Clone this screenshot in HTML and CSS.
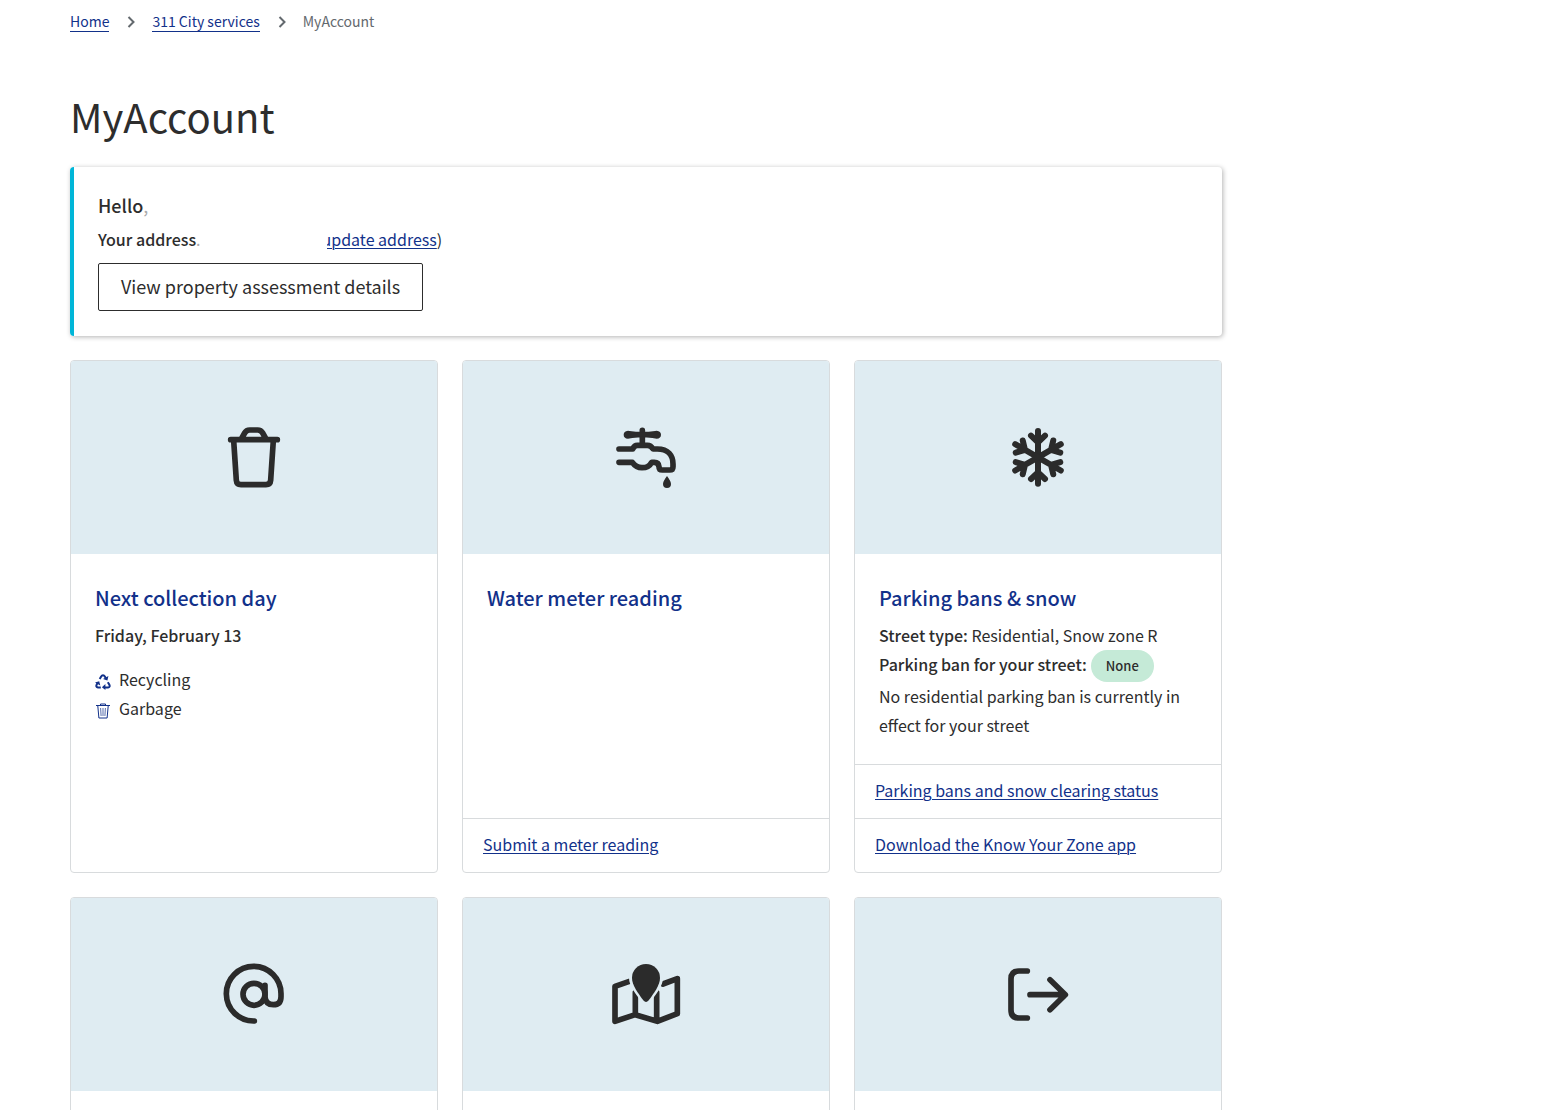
FILE: index.html
```html
<!DOCTYPE html>
<html lang="en">
<head>
<meta charset="utf-8">
<title>MyAccount</title>
<meta name="viewport" content="width=device-width, initial-scale=1">
<link rel="stylesheet" href="styles.css">
</head>
<body>
<div class="page">
  <nav aria-label="Breadcrumb">
    <ol class="breadcrumb">
      <li><a href="#">Home</a></li>
      <li><svg class="chevron" viewBox="0 0 8 12" aria-hidden="true"><path d="M1.5 1l5 5-5 5"/></svg><a href="#">311 City services</a></li>
      <li aria-current="page"><svg class="chevron" viewBox="0 0 8 12" aria-hidden="true"><path d="M1.5 1l5 5-5 5"/></svg><span>MyAccount</span></li>
    </ol>
  </nav>
  <main>
    <h1>MyAccount</h1>
    <section class="welcome">
      <h2>Hello<span class="faint">,</span></h2>
      <p class="address"><strong>Your address</strong><span class="faint">.</span><span class="blank"></span><a href="#">update address</a>)</p>
      <button class="outline-button" type="button">View property assessment details</button>
    </section>
    <div class="cards">
      <article class="card">
        <div class="card-image"><svg class="card-icon" viewBox="12 21 240 240" aria-hidden="true">
          <path d="M62 86H202M71 88l8 120q1 13 14 13H168q13 0 14-13L190 88M94 84l10-18q5-9 15-9h24q10 0 15 9l10 18" stroke-width="17"/></svg></div>
        <div class="card-body">
          <h3>Next collection day</h3>
          <p><strong>Friday, February 13</strong></p>
          <ul class="pickup">
            <li><svg class="small-icon" viewBox="0 0 16 16" aria-hidden="true"><path d="M4.7 5L6.3 2.2Q6.8 1.2 8 1.2T9.7 2.2L11 4.5M12.8 8.2l1.6 2.6q1 2.4-1.4 2.6H9.5M5.8 13.4H3Q.6 13 1.6 10.8L2.8 8.6" fill="none" stroke="currentColor" stroke-width="2"/><path d="M8 5l4.4 1.4L13.4 2zM10.4 9.9v6.1L6.9 13.2zM0 8.4l4.2-1.2 1.1 4.2z"/></svg>Recycling</li>
            <li><svg class="small-icon" viewBox="0 0 16 16" aria-hidden="true"><path d="M1 2.5h14M5.5 2V1h5v1M2.8 3l1.1 12h8.2l1.1-12" fill="none" stroke="currentColor" stroke-width="1"/><path d="M5.6 5l.5 8M8 5v8M10.4 5l-.5 8" fill="none" stroke="currentColor" stroke-width="1" opacity=".7"/></svg>Garbage</li>
          </ul>
        </div>
      </article>
      <article class="card">
        <div class="card-image"><svg class="card-icon" viewBox="18 21 240 240" aria-hidden="true">
          <path d="M57 114h41q5-11 14-11h30q11 0 17 11h13c33 0 47 20 47 45v8q0 10-10 10h-22q-10 0-10-10-1-13-14-13h-8c-8 15-18 16-29 16s-20-3-29-16H57M127 58v42M88 71h80" stroke-width="17"/>
          <path d="M127 66L84 59q-13 1-13 12t13 12l43-7 43 7q13-1 13-12t-13-12zM201 195q12 16 12 24a12 12 0 0 1-24 0q0-8 12-24z" class="solid"/></svg></div>
        <div class="card-body"><h3>Water meter reading</h3></div>
        <a class="card-link" href="#">Submit a meter reading</a>
      </article>
      <article class="card">
        <div class="card-image"><svg class="card-icon" viewBox="24 21 240 240" aria-hidden="true">
          <path id="arm" d="M144 139V60M123 74l21 20 21-20" stroke-width="18"/>
          <use href="#arm" transform="rotate(60 144 139)"/><use href="#arm" transform="rotate(120 144 139)"/><use href="#arm" transform="rotate(180 144 139)"/><use href="#arm" transform="rotate(240 144 139)"/><use href="#arm" transform="rotate(300 144 139)"/></svg></div>
        <div class="card-body">
          <h3>Parking bans &amp; snow</h3>
          <p><strong>Street type:</strong> Residential, Snow zone R</p>
          <p class="status"><strong>Parking ban for your street:</strong> <span class="badge">None</span></p>
          <p>No residential parking ban is currently in effect for your street</p>
        </div>
        <a class="card-link" href="#">Parking bans and snow clearing status</a>
        <a class="card-link" href="#">Download the Know Your Zone app</a>
      </article>
      <article class="card">
        <div class="card-image"><svg class="card-icon" viewBox="12 12 240 240" aria-hidden="true">
          <path d="M133 210A82 82 0 1 1 213 129v8q0 24-23 24t-25-24V103" stroke-width="17"/><circle cx="132" cy="130" r="33" stroke-width="17"/></svg></div>
        <div class="card-body"></div>
      </article>
      <article class="card">
        <div class="card-image"><svg class="card-icon" viewBox="18 12 240 240" aria-hidden="true">
          <path d="M88 91L45 106V211l61-20 66 20 60-23V83l-43 16M106 125v66M170 125v84" stroke-width="17"/>
          <path d="M138 156q-4 0-8-5C112 128 92 102 92 81a46 46 0 0 1 92 0c0 21-20 47-38 70q-4 5-8 5z" class="halo"/>
          <path d="M138 153q-4 0-8-5C114 127 96 102 96 81a42 42 0 0 1 84 0c0 21-18 46-34 67q-4 5-8 5z" class="solid"/></svg></div>
        <div class="card-body"></div>
      </article>
      <article class="card">
        <div class="card-image"><svg class="card-icon" viewBox="24 12 240 240" aria-hidden="true">
          <path d="M112 60H87Q63 60 63 84v93q0 24 24 24h25M120 131H225M180 86l46 45-46 45" stroke-width="17"/></svg></div>
        <div class="card-body"></div>
      </article>
    </div>
  </main>
</div>
</body>
</html>
```
FILE: styles.css
```css
* { box-sizing: border-box; }
body {
  margin: 0;
  color: #2d2d2d;
  background: #fff;
  font-family: "Noto Sans CJK SC", "Noto Sans", sans-serif;
  font-size: 16px;
  line-height: 29px;
}
h1, h2, h3, p, ol, ul { margin: 0; padding: 0; font-weight: 400; }
ol, ul { list-style: none; }
strong { font-weight: 500; }
a { color: #12318a; text-underline-offset: 2px; text-decoration-thickness: 1px; }
.page { max-width: 1222px; padding-left: 70px; }
.breadcrumb {
  display: flex;
  gap: 18px;
  padding-top: 12px;
  font-size: 14px;
  line-height: 22px;
  color: #63696e;
}
.breadcrumb li { display: flex; align-items: center; gap: 17px; }
.breadcrumb a, .breadcrumb span { line-height: 19px; border-bottom: 1px solid transparent; }
.breadcrumb a { text-decoration: none; border-color: currentColor; }
.chevron { width: 8px; height: 12px; fill: none; stroke: #63696e; stroke-width: 2; }
h1 { margin-top: 52px; font-size: 40px; line-height: 64px; }
.welcome {
  margin-top: 19px;
  padding: 22px 24px 25px;
  border-left: 4px solid #00b6d8;
  border-radius: 4px;
  box-shadow: 1px 1px 5px rgba(0, 0, 0, 0.3);
}
.welcome h2 { font-size: 18px; font-weight: 500; line-height: 32px; }
.address { margin: 3px 0 9px; line-height: 30px; }
.faint { color: #aaa; font-weight: 400; }
.blank {
  position: relative;
  display: inline-block;
  width: 126px;
  height: 24px;
  margin-right: -5px;
  vertical-align: middle;
  background: #fff;
}
.outline-button {
  display: block;
  height: 48px;
  padding: 0 22px 2px;
  border: 1px solid #2d2d2d;
  border-radius: 2px;
  background: #fff;
  color: inherit;
  font: inherit;
  font-size: 18px;
}
.cards {
  display: grid;
  grid-template-columns: repeat(3, minmax(0, 1fr));
  gap: 24px;
  margin-top: 24px;
}
.card {
  display: flex;
  flex-direction: column;
  border: 1px solid #d8dbdd;
  border-radius: 4px;
  overflow: hidden;
}
.card-image { display: grid; place-items: center; height: 193px; background: #dfecf2; }
.card-icon {
  width: 80px;
  height: 80px;
  fill: none;
  stroke: #2b2b2b;
  stroke-linecap: round;
  stroke-linejoin: round;
}
.solid { fill: #2b2b2b; stroke: none; }
.halo { fill: #dfecf2; stroke: #dfecf2; stroke-width: 10px; }
.card-body { flex: 1; padding: 27px 24px 24px; }
h3 { margin-bottom: 6px; color: #12318a; font-size: 20px; font-weight: 500; line-height: 34px; }
.pickup { margin-top: 15px; }
.pickup li { display: flex; align-items: center; gap: 8px; }
.small-icon { width: 16px; height: 16px; margin-top: 4px; color: #12318a; fill: currentColor; }
.status { display: flex; align-items: flex-start; gap: 4px; }
.badge {
  padding: 0 15px;
  border-radius: 16px;
  background: #c5ead7;
  font-size: 13px;
  font-weight: 500;
  line-height: 32px;
}
.card-link { padding: 11px 20px 13px; border-top: 1px solid #d8dbdd; }
```
